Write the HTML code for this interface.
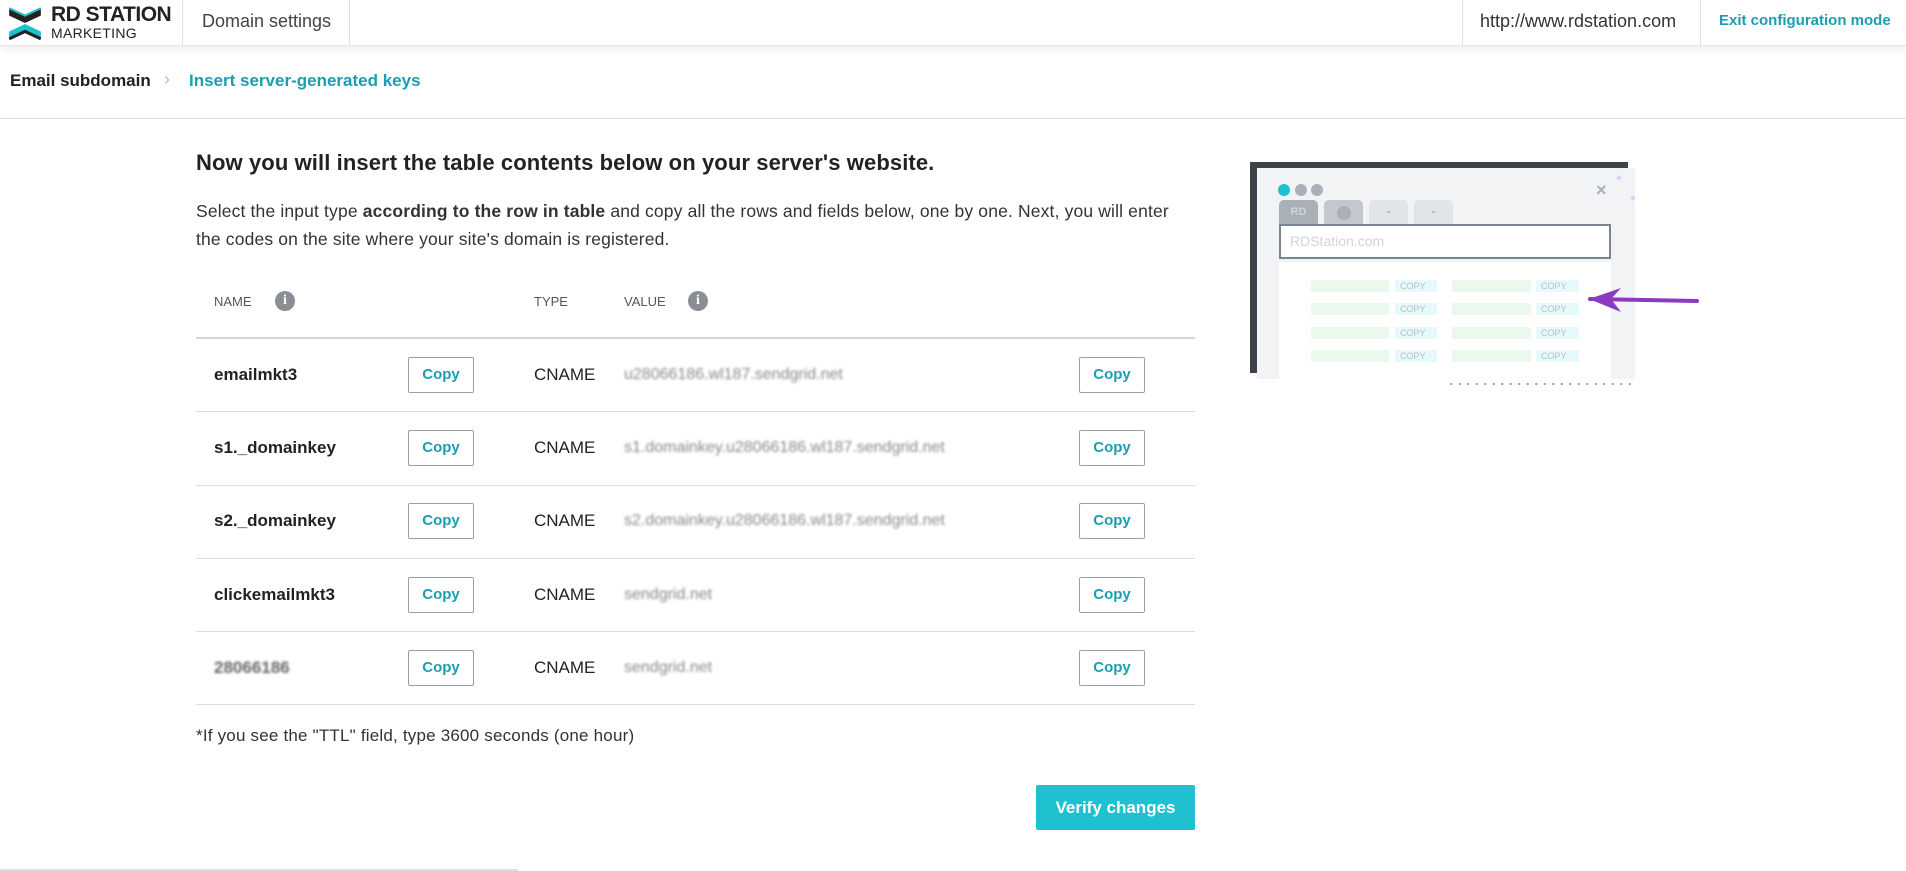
<!DOCTYPE html>
<html><head><meta charset="utf-8"><style>
*{margin:0;padding:0;box-sizing:border-box}
body{width:1906px;height:871px;position:relative;background:#fff;font-family:"Liberation Sans",sans-serif;color:#222;overflow:hidden}
.a{position:absolute;white-space:nowrap}
.hdr{position:absolute;left:0;top:0;width:1906px;height:46px;background:#fff;box-shadow:0 3px 8px rgba(0,0,0,.08);border-bottom:1px solid #e6e6e6}
.vd{position:absolute;top:0;width:1px;height:46px;background:#e0e0e0}
.btn{position:absolute;width:66px;height:36px;border:1px solid #9aa0a6;border-radius:2px;background:#fff;color:#1a9eb0;font-weight:bold;font-size:15px;text-align:center;line-height:34px}
.nm{font-weight:bold;font-size:17px;color:#222}
.bl{filter:blur(1.4px);color:#888;font-size:16px}
.rl{position:absolute;left:196px;width:999px;height:1px;background:#ddd}
.th{font-size:13px;color:#555}
.ic{position:absolute;width:20px;height:20px;border-radius:50%;background:#8a8f96;color:#fff;font-weight:bold;font-size:14px;text-align:center;line-height:20px;font-family:"Liberation Serif",serif}
.g{position:absolute;height:12px;background:#eaf8ee}
.c{position:absolute;height:12px;background:#e6f9fb;color:#b8c0c4;font-size:9px;line-height:12px;padding-left:5px}
</style></head><body>
<div class="hdr">
 <svg class="a" style="left:9px;top:4px" width="32" height="38" viewBox="0 0 30 36"><path d="M0 4 L15 11 L30 4 L30 11 L15 18 L0 11Z" fill="#222"/><path d="M0 4 L15 11 L30 4" stroke="#1fc0cf" stroke-width="2" fill="none"/><path d="M0 26 L15 19 L30 26 L30 33 L15 26 L0 33Z" fill="#1fc0cf"/><path d="M0 33 L15 26 L30 33" stroke="#222" stroke-width="3" fill="none"/></svg>
 <div class="a" style="left:51px;top:3px;font-size:21px;font-weight:bold;letter-spacing:-.5px">RD STATION</div>
 <div class="a" style="left:51px;top:25px;font-size:14px;letter-spacing:.3px">MARKETING</div>
 <div class="vd" style="left:182px"></div>
 <div class="a" style="left:202px;top:11px;font-size:18px;color:#444">Domain settings</div>
 <div class="vd" style="left:349px"></div>
 <div class="vd" style="left:1462px"></div>
 <div class="a" style="left:1480px;top:11px;font-size:18px;color:#333">http://www.rdstation.com</div>
 <div class="vd" style="left:1700px"></div>
 <div class="a" style="left:1719px;top:12px;font-size:15px;color:#1a9eb0;font-weight:bold">Exit configuration mode</div>
</div>
<div class="a" style="left:10px;top:71px;font-size:17px;font-weight:bold;color:#222">Email subdomain</div>
<div class="a" style="left:164px;top:69px;font-size:18px;color:#bbb">›</div>
<div class="a" style="left:189px;top:71px;font-size:17px;font-weight:bold;color:#1a9eb0">Insert server-generated keys</div>
<div class="a" style="left:0;top:118px;width:1906px;height:1px;background:#ddd"></div>

<div class="a" style="left:196px;top:150px;font-size:22px;font-weight:bold;color:#222;letter-spacing:.1px">Now you will insert the table contents below on your server's website.</div>
<div class="a" style="left:196px;top:197px;font-size:17.5px;line-height:28px;color:#333;letter-spacing:.15px">Select the input type <b>according to the row in table</b> and copy all the rows and fields below, one by one. Next, you will enter<br>the codes on the site where your site's domain is registered.</div>

<div class="a th" style="left:214px;top:294px">NAME</div><div class="ic" style="left:275px;top:291px">i</div>
<div class="a th" style="left:534px;top:294px">TYPE</div>
<div class="a th" style="left:624px;top:294px">VALUE</div><div class="ic" style="left:688px;top:291px">i</div>
<div class="rl" style="top:337px;height:2px;background:#d4d8dc"></div>

<div class="a nm" style="left:214px;top:365px">emailmkt3</div><div class="btn" style="left:408px;top:357px">Copy</div><div class="a nm" style="left:534px;top:365px;font-weight:normal">CNAME</div><div class="a bl" style="left:624px;top:366px">u28066186.wl187.sendgrid.net</div><div class="btn" style="left:1079px;top:357px">Copy</div>
<div class="rl" style="top:411px"></div>
<div class="a nm" style="left:214px;top:438px">s1._domainkey</div><div class="btn" style="left:408px;top:430px">Copy</div><div class="a nm" style="left:534px;top:438px;font-weight:normal">CNAME</div><div class="a bl" style="left:624px;top:439px">s1.domainkey.u28066186.wl187.sendgrid.net</div><div class="btn" style="left:1079px;top:430px">Copy</div>
<div class="rl" style="top:485px"></div>
<div class="a nm" style="left:214px;top:511px">s2._domainkey</div><div class="btn" style="left:408px;top:503px">Copy</div><div class="a nm" style="left:534px;top:511px;font-weight:normal">CNAME</div><div class="a bl" style="left:624px;top:512px">s2.domainkey.u28066186.wl187.sendgrid.net</div><div class="btn" style="left:1079px;top:503px">Copy</div>
<div class="rl" style="top:558px"></div>
<div class="a nm" style="left:214px;top:585px">clickemailmkt3</div><div class="btn" style="left:408px;top:577px">Copy</div><div class="a nm" style="left:534px;top:585px;font-weight:normal">CNAME</div><div class="a bl" style="left:624px;top:586px">sendgrid.net</div><div class="btn" style="left:1079px;top:577px">Copy</div>
<div class="rl" style="top:631px"></div>
<div class="a nm" style="left:214px;top:658px;filter:blur(1.4px);color:#666">28066186</div><div class="btn" style="left:408px;top:650px">Copy</div><div class="a nm" style="left:534px;top:658px;font-weight:normal">CNAME</div><div class="a bl" style="left:624px;top:659px">sendgrid.net</div><div class="btn" style="left:1079px;top:650px">Copy</div>
<div class="rl" style="top:704px"></div>

<div class="a" style="left:196px;top:726px;font-size:17px;color:#333;letter-spacing:.2px">*If you see the "TTL" field, type 3600 seconds (one hour)</div>
<div class="a" style="left:1036px;top:785px;width:159px;height:45px;background:#1fc0cf;border-radius:2px;color:#fff;font-weight:bold;font-size:17px;text-align:center;line-height:45px">Verify changes</div>
<div class="a" style="left:0;top:869px;width:518px;height:2px;background:#ddd"></div>

<!-- illustration -->
<div class="a" style="left:1250px;top:162px;width:378px;height:211px;background:#3d434b"></div>
<div class="a" style="left:1257px;top:168px;width:378px;height:211px;background:#f2f3f5"></div>
<div class="a" style="left:1278px;top:184px;width:12px;height:12px;border-radius:50%;background:#1fc0cf"></div>
<div class="a" style="left:1295px;top:184px;width:12px;height:12px;border-radius:50%;background:#aab0b7"></div>
<div class="a" style="left:1311px;top:184px;width:12px;height:12px;border-radius:50%;background:#aab0b7"></div>
<div class="a" style="left:1596px;top:180px;font-size:18px;font-weight:bold;color:#aab0b7">×</div>
<div class="a" style="left:1279px;top:200px;width:39px;height:24px;background:#aab0b7;border-radius:5px 5px 0 0;color:#d0d4d8;font-size:11px;font-weight:bold;text-align:center;line-height:24px">RD</div>
<div class="a" style="left:1324px;top:200px;width:39px;height:24px;background:#c4c8ce;border-radius:5px 5px 0 0"><div style="margin:6px auto;width:14px;height:14px;border-radius:50%;background:#aab0b7"></div></div>
<div class="a" style="left:1369px;top:200px;width:39px;height:24px;background:#e2e5e8;border-radius:5px 5px 0 0;color:#888;text-align:center;font-size:11px;line-height:24px">-</div>
<div class="a" style="left:1414px;top:200px;width:39px;height:24px;background:#e2e5e8;border-radius:5px 5px 0 0;color:#888;text-align:center;font-size:11px;line-height:24px">-</div>
<div class="a" style="left:1279px;top:224px;width:332px;height:35px;background:#fff;border:2px solid #7a8591;color:#d0d4d8;font-size:14px;line-height:31px;padding-left:9px">RDStation.com</div>
<div class="a" style="left:1279px;top:262px;width:332px;height:117px;background:#fff"></div>
<div class="g" style="left:1311px;top:280px;width:78px"></div><div class="c" style="left:1395px;top:280px;width:42px">COPY</div><div class="g" style="left:1452px;top:280px;width:79px"></div><div class="c" style="left:1536px;top:280px;width:43px">COPY</div>
<div class="g" style="left:1311px;top:303px;width:78px"></div><div class="c" style="left:1395px;top:303px;width:42px">COPY</div><div class="g" style="left:1452px;top:303px;width:79px"></div><div class="c" style="left:1536px;top:303px;width:43px">COPY</div>
<div class="g" style="left:1311px;top:327px;width:78px"></div><div class="c" style="left:1395px;top:327px;width:42px">COPY</div><div class="g" style="left:1452px;top:327px;width:79px"></div><div class="c" style="left:1536px;top:327px;width:43px">COPY</div>
<div class="g" style="left:1311px;top:350px;width:78px"></div><div class="c" style="left:1395px;top:350px;width:42px">COPY</div><div class="g" style="left:1452px;top:350px;width:79px"></div><div class="c" style="left:1536px;top:350px;width:43px">COPY</div>
<svg class="a" style="left:1585px;top:285px" width="115" height="30" viewBox="0 0 115 30"><path d="M5 14 L112 16" stroke="#8a3bbf" stroke-width="4" stroke-linecap="round"/><path d="M4 14 L36 3 L26 14 L36 27Z" fill="#8a3bbf"/></svg>
<div class="a" style="left:1447px;top:383px;width:186px;height:2px;background-image:radial-gradient(circle,#b48ee0 1px,transparent 1.3px);background-size:8.5px 2px"></div>
<div class="a" style="left:1617px;top:176px;width:4px;height:4px;background:#e0d0f5;transform:rotate(45deg)"></div>
<div class="a" style="left:1631px;top:196px;width:4px;height:4px;background:#e0d0f5;transform:rotate(45deg)"></div>
</body></html>
